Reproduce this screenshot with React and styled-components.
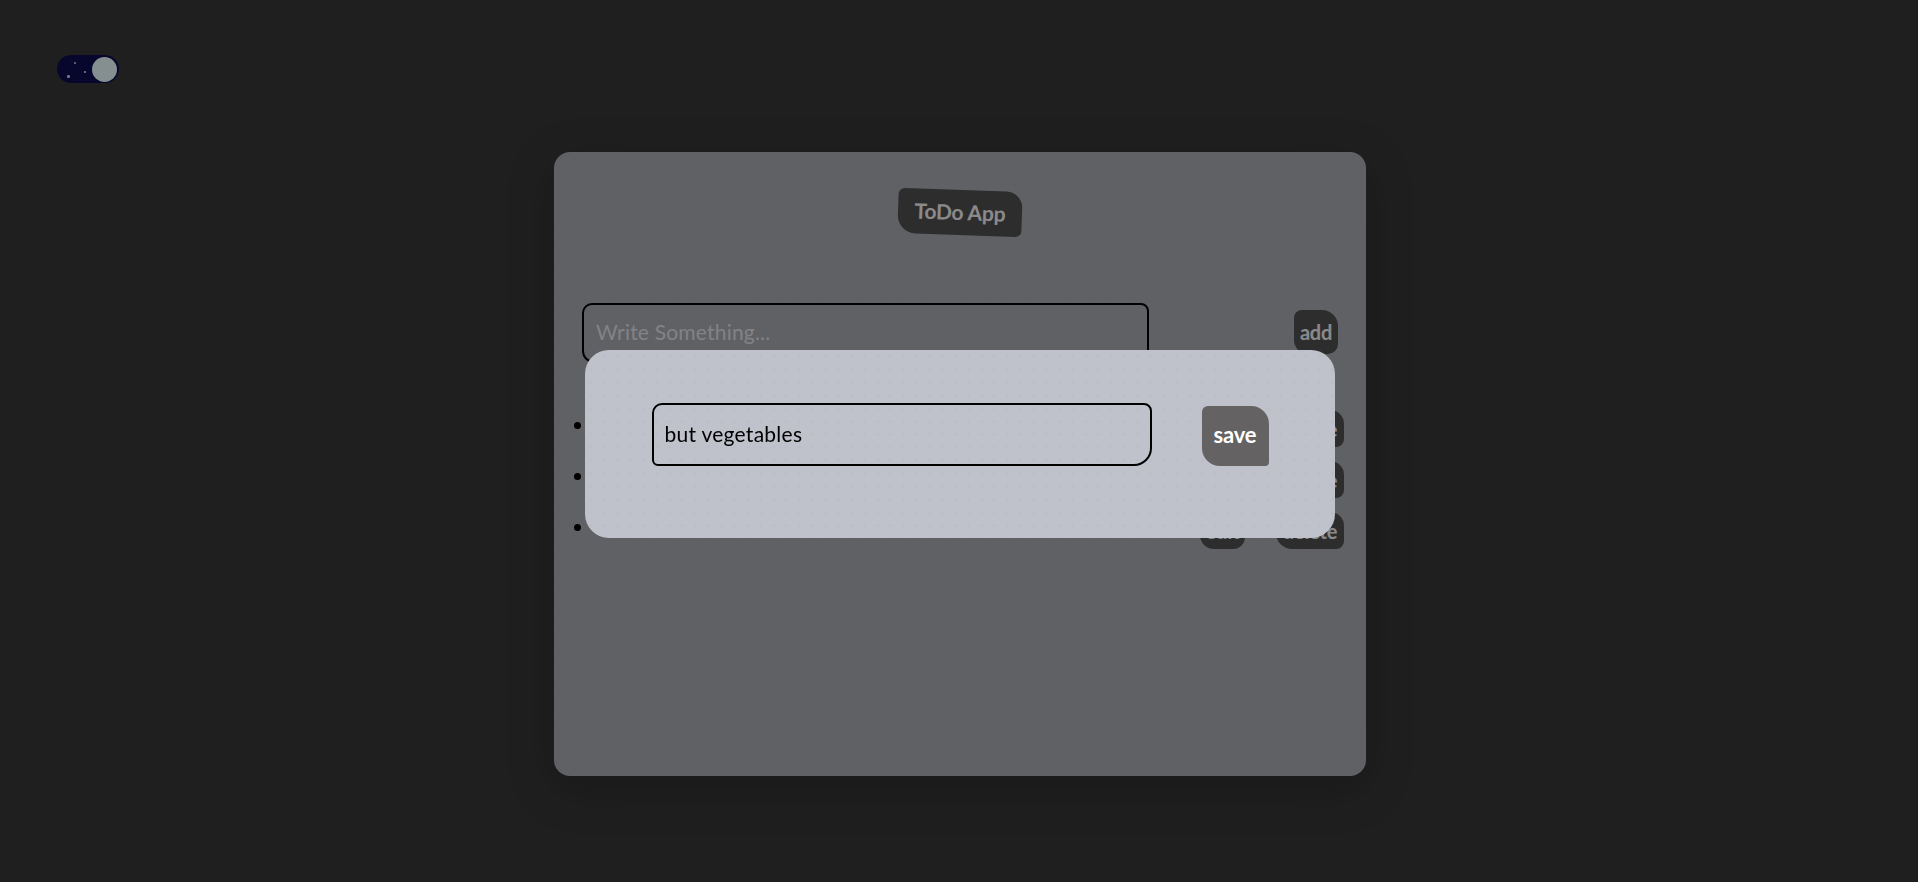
import React from "react";
import styled, { createGlobalStyle } from "styled-components";

const FONT = `"Lato", "Noto Sans", sans-serif`;
const DOTS = `radial-gradient(rgba(70, 75, 100, 0.028) 1.5px, transparent 2.2px)`;

const todos = ["buy milk", "walk the dog", "call mom"];
const stars = [
  { left: 17, top: 7, size: 2 },
  { left: 10, top: 20, size: 2.5 },
  { left: 27, top: 16, size: 1.5 },
];

const App = () => {
  return (
    <Page>
      <GlobalStyle />
      <Toggle>
        {stars.map((star) => (
          <Star key={star.left} $left={star.left} $top={star.top} $size={star.size} />
        ))}
        <Knob />
      </Toggle>

      <Card>
        <Title>ToDo App</Title>
        <AddRow>
          <MainInput placeholder="Write Something..." readOnly />
          <AddButton>add</AddButton>
        </AddRow>
        <TodoList>
          {todos.map((todo) => (
            <TodoItem key={todo}>
              <TodoText>{todo}</TodoText>
              <EditButton>edit</EditButton>
              <DeleteButton>delete</DeleteButton>
            </TodoItem>
          ))}
        </TodoList>
      </Card>

      <Overlay>
        <Modal>
          <ModalInput defaultValue="but vegetables" />
          <SaveButton>save</SaveButton>
        </Modal>
      </Overlay>
    </Page>
  );
};
export default App;

const GlobalStyle = createGlobalStyle`
  html, body {
    margin: 0;
    padding: 0;
    height: 100%;
    overflow: hidden;
  }
  * {
    box-sizing: border-box;
  }
`;

const Page = styled.div`
  height: 882px;
  background-color: #343434;
  font-family: ${FONT};
  padding: 55px 0 0 57px;
`;

const Toggle = styled.div`
  position: relative;
  display: flex;
  align-items: center;
  justify-content: flex-end;
  width: 62px;
  height: 28px;
  padding-right: 2px;
  border-radius: 14px;
  background-color: #0d0d4e;
`;

const Star = styled.span`
  position: absolute;
  left: ${(props) => props.$left}px;
  top: ${(props) => props.$top}px;
  width: ${(props) => props.$size}px;
  height: ${(props) => props.$size}px;
  border-radius: 50%;
  background-color: #c5c8e0;
`;

const Knob = styled.span`
  width: 25px;
  height: 25px;
  border-radius: 50%;
  background-color: #dfeef0;
`;

const Card = styled.div`
  width: 812px;
  height: 624px;
  margin: 69px 0 0 497px;
  padding: 38px 22px 0 28px;
  display: flex;
  flex-direction: column;
  background-color: #9fa2a9;
  background-image: ${DOTS};
  background-size: 13px 13px;
  border-radius: 16px;
  box-shadow: 0 12px 50px rgba(0, 0, 0, 0.2);
`;

const Chip = styled.button`
  display: flex;
  align-items: center;
  justify-content: center;
  padding: 0;
  border: none;
  background-color: #4c4c4e;
  color: #e6e6e6;
  font-family: ${FONT};
  font-weight: 700;
  font-size: 20px;
  letter-spacing: -0.2px;
`;

const Title = styled(Chip)`
  align-self: center;
  margin-right: 6px;
  width: 124px;
  height: 45px;
  padding-bottom: 3px;
  font-size: 21px;
  transform: rotate(2deg);
  border-radius: 6px 16px 6px 18px;
`;

const AddRow = styled.div`
  display: flex;
  align-items: center;
  justify-content: space-between;
  margin-top: 68px;
  padding-right: 6px;
`;

const MainInput = styled.input`
  width: 567px;
  height: 60px;
  padding: 0 12px 4px;
  border: 2px solid #000000;
  border-radius: 10px 8px 6px 12px;
  background: transparent;
  font-family: ${FONT};
  font-size: 21px;
  letter-spacing: 0.2px;
  outline: none;
  &::placeholder {
    color: #d8dadd;
    opacity: 1;
  }
`;

const AddButton = styled(Chip)`
  width: 44px;
  height: 44px;
  margin-bottom: 2px;
  border-radius: 8px 16px 10px 14px;
`;

const TodoList = styled.ul`
  margin: 47px -1px 0 0;
  padding: 0 0 0 13px;
  display: flex;
  flex-direction: column;
  gap: 14px;
`;

const TodoItem = styled.li`
  height: 37px;
  font-size: 21px;
  line-height: 30px;
  white-space: nowrap;
`;

const TodoText = styled.span`
  display: inline-block;
  width: 605px;
  font-size: 18px;
  vertical-align: top;
`;

const RowButton = styled(Chip)`
  display: inline-flex;
  vertical-align: top;
  height: 37px;
`;

const EditButton = styled(RowButton)`
  width: 45px;
  margin-right: 31px;
  border-radius: 6px 8px 12px 14px;
`;

const DeleteButton = styled(RowButton)`
  width: 68px;
  border-radius: 12px 14px 8px 16px;
`;

const Overlay = styled.div`
  position: fixed;
  inset: 0;
  display: flex;
  justify-content: center;
  padding-top: 350px;
  background-color: rgba(0, 0, 0, 0.4);
  backdrop-filter: blur(0.6px);
`;

const Modal = styled.div`
  width: 750px;
  height: 188px;
  margin-left: 1px;
  padding: 53px 66px 0 67px;
  display: flex;
  align-items: flex-start;
  align-self: flex-start;
  justify-content: space-between;
  background-color: #bfc1cb;
  background-image: ${DOTS};
  background-size: 13px 13px;
  border-radius: 24px;
`;

const ModalInput = styled.input`
  width: 500px;
  height: 63px;
  padding: 0 11px 2px;
  border: 2px solid #000000;
  border-radius: 10px 8px 18px 6px;
  background: transparent;
  color: #000000;
  font-family: ${FONT};
  font-size: 21px;
  letter-spacing: 0.26px;
  outline: none;
`;

const SaveButton = styled(Chip)`
  width: 67px;
  height: 60px;
  margin-top: 3px;
  padding-bottom: 4px;
  background-color: #656264;
  color: #ffffff;
  font-size: 22px;
  border-radius: 6px 18px 4px 18px;
`;
